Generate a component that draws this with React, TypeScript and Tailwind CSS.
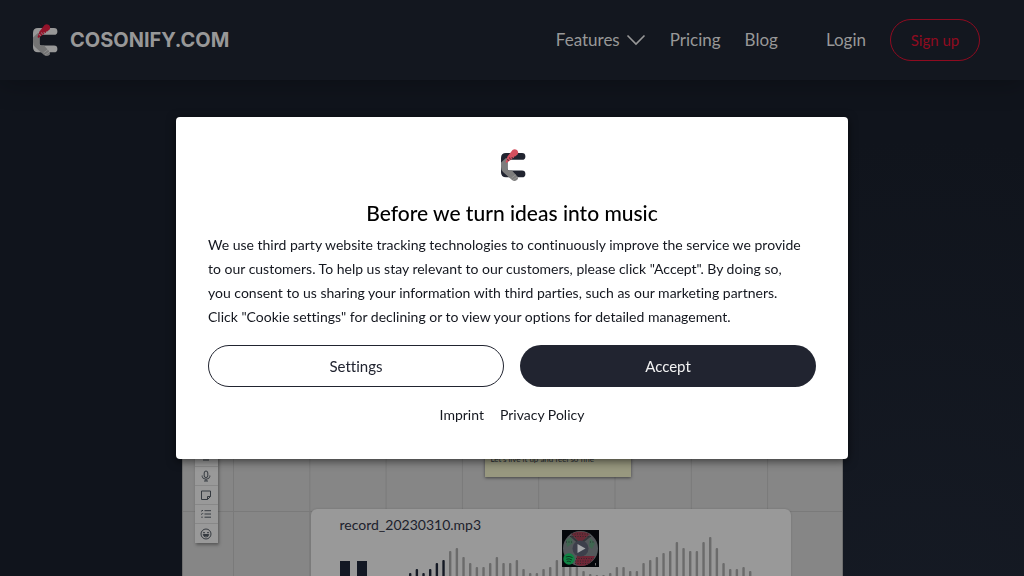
type LogoProps = { body: string; tail: string; accent: string };

function LogoMark({ body, tail, accent }: LogoProps) {
  return (
    <svg viewBox="0 0 26 32" className="h-8 w-[26px] shrink-0" aria-hidden="true">
      <path
        d="M6 4H22A3.400 3.400 0 0 1 22 10.800H9.500Q7.500 10.800 7.500 12.800V19.500Q7.500 21.500 9.500 21.500H22A3.400 3.400 0 0 1 22 28.300H6Q1 28.300 1 23.300V9Q1 4 6 4Z"
        fill={body}
      />
      <path d="M1 13.500L6 9L8.500 10.800L7.500 12.800V19.500Q7.500 21.500 9.500 21.500H12L17 27Q19 29.500 17 31Q14.500 33 12 31L3 23Q1 21 1 18Z" fill={tail} />
      <path d="M1 15L7.500 9.500" stroke={tail} strokeWidth="1" strokeDasharray="1 0.800" />
      <path d="M12.500 1Q14.500-0.500 17 1Q19 3 17.500 5.500L14 8.500L6.500 14L5.500 13L7.500 7.500Z" fill={accent} />
      <path d="M7.500 10L8.500 12M9.500 8.500L10.500 10.500M12 8L12.500 9.800M14.500 7.500V9.500" stroke={body} strokeWidth="0.8" />
      <path d="M11.500 29L16 25.500M13 31L18 27.500M15.500 32L18 30" stroke="#ffffff" strokeWidth="0.6" opacity="0.3" />
    </svg>
  );
}

const levels = [
  4, 8, 4, 8, 14, 17, 26, 29, 20, 14, 10, 10, 14, 20, 14, 14, 17, 8, 4, 4, 8, 10, 17, 14, 14, 10, 6, 3, 2, 2, 4, 10,
  10, 6, 6, 14, 17, 20, 24, 26, 35, 29, 26, 26, 35, 40, 29, 14, 8, 8, 10, 6,
];

function Waveform() {
  return (
    <svg viewBox="0 0 344 80" className="h-20 w-[344px]" aria-hidden="true">
      {levels.map((level, i) => (
        <rect
          key={i}
          x={i * 6.667}
          y={40 - level}
          width="2.4"
          height={level * 2}
          rx="1"
          fill={i < 6 ? "#151a25" : "#6b6b6b"}
        />
      ))}
    </svg>
  );
}

function Cover() {
  return (
    <svg viewBox="0 0 37 37" className="h-[37px] w-[37px]" aria-hidden="true">
      <rect width="37" height="37" fill="#05070b" />
      <circle cx="18.500" cy="18.500" r="17.500" fill="#53585b" />
      <path d="M9 4Q18-1 28 4L21 11H16Z" fill="#6a2a36" />
      <path d="M13 34L15 26H33Q29 36 18 36Z" fill="#6f2636" />
      <path d="M4 10L9 7L11 13L5 17ZM28 8L33 13L30 19L27 16Z" fill="#3f6650" />
      <path d="M9 6L18 14L28 6" stroke="#34373b" strokeWidth="2" fill="none" />
      <path
        d="M10 4H27M8 6.500H29M14 28.500H32M13 31H30M13 33.500H27M4 12H10M28 12H33"
        stroke="#24262b"
        strokeWidth="0.8"
        strokeDasharray="1 1.500"
      />
      <circle cx="18.500" cy="18.500" r="8" fill="#3d3f4b" />
      <path d="M15.500 14L23.500 18.500L15.500 23Z" fill="#a6a8ab" />
      <circle cx="7" cy="29" r="5.700" fill="#108444" />
      <path d="M3.800 27Q7 25.500 10.500 27.500M4.300 29.300Q7 28 10 30M4.800 31.400Q7 30.500 9 32" stroke="#0b3b20" strokeWidth="1" fill="none" />
      <path d="M33.500 33V35.500" stroke="#888" strokeWidth="0.8" />
    </svg>
  );
}

const tools = [
  { label: "Text", path: "M2 3H10M2 6H10M3 9H9" },
  { label: "Record", path: "M6 1Q4.200 1 4.200 3V6Q4.200 7.500 6 7.500T7.800 6V3Q7.800 1 6 1ZM2.200 5.500V6.500Q2.500 9.200 6 9.200T9.800 6.500V5.500M6 9.200V11M4 11H8" },
  { label: "Note", path: "M1.500 2H10.500V7.500L7.500 10.500H1.500ZM10.500 7.500H7.500V10.500" },
  { label: "List", path: "M1 2.500L1.800 3.200L3 2M1 5.700L1.800 6.400L3 5.200M1.300 9.200H2.700M4.500 2.700H11M4.500 6H11M4.500 9.200H11" },
  { label: "Emoji", path: "M6 1A5 5 0 1 0 6 11A5 5 0 1 0 6 1ZM3 4.700L5 4.700M7 4.700L9 4.700M3.200 6.500H8.800Q8.300 9 6 9T3.200 6.500ZM4 7.500H8" },
];

function Header() {
  return (
    <header className="relative flex h-20 shrink-0 items-center justify-between bg-[#13171f] pr-11 pl-8 shadow-[0_4px_24px_rgba(0,0,0,0.25)]">
      <a href="#home" className="flex items-center gap-3 text-[#989898]">
        <LogoMark body="#989898" tail="#747474" accent="#92132a" />
        <span className="font-[Inter,sans-serif] text-[20px] font-bold">COSONIFY.COM</span>
      </a>
      <nav className="flex items-center gap-6 text-[17px] text-[#989898]">
        <button type="button" className="flex items-center gap-1.5">
          Features
          <svg viewBox="0 0 20 12" className="h-3 w-5" fill="none" stroke="currentColor" strokeWidth="1.6" aria-hidden="true">
            <path d="M1.500 1.500L10 10L18.500 1.500" />
          </svg>
        </button>
        <a href="#pricing">Pricing</a>
        <a href="#blog">Blog</a>
        <a href="#login" className="ml-6">Login</a>
        <a
          href="#signup"
          className="flex h-[42px] w-[90px] items-center justify-center rounded-full border border-[#8f0b20] text-[15px] text-[#8f0b20]"
        >
          Sign up
        </a>
      </nav>
    </header>
  );
}

function Board() {
  return (
    <div className="relative h-[460px] w-[661px] shrink-0 border-x border-[#6f6f6f] bg-[#868686]">
      <svg className="absolute inset-0 h-full w-full" aria-hidden="true">
        <defs>
          <pattern id="grid" x="50" y="15" width="76.300" height="76.300" patternUnits="userSpaceOnUse">
            <path d="M0.500 0V76.300" stroke="#7a7a7a" strokeWidth="1" />
          </pattern>
        </defs>
        <rect width="100%" height="100%" fill="url(#grid)" />
        <path d="M0 211.500H661" stroke="#7a7a7a" />
      </svg>
      <div className="absolute top-[148px] left-3 flex w-[23px] flex-col divide-y divide-[#888888] bg-[#999999] text-[#353a40] shadow-[1px_2px_3px_rgba(0,0,0,0.35)]">
        {tools.map(({ label, path }) => (
          <button key={label} type="button" aria-label={label} className="flex h-[19px] items-center justify-center">
            <svg viewBox="0 0 12 12" className="h-3 w-3" fill="none" stroke="currentColor" strokeWidth="1" aria-hidden="true">
              <path d={path} />
            </svg>
          </button>
        ))}
      </div>
      <div className="absolute top-[97px] left-[302px] flex h-20 w-[146px] items-end bg-[#98987f] px-1.5 pb-3 text-[8px] leading-3 text-[#2b2f36] shadow-[0_1px_3px_rgba(0,0,0,0.5)]">
        Let&apos;s live it up and feel so fine
      </div>
      <div className="absolute top-[209px] left-32 h-48 w-[480px] rounded-md bg-[#999999] shadow-[0_0_2px_rgba(0,0,0,0.2)]">
        <p className="px-[29px] pt-1 text-[14px] leading-6 text-[#1c212c]">record_20230310.mp3</p>
        <div className="flex items-start gap-[42px] pl-[29px]">
          <button type="button" aria-label="Pause" className="mt-6 flex gap-[7px]">
            <span className="h-9 w-2.5 bg-[#131824]" />
            <span className="h-9 w-2.5 bg-[#131824]" />
          </button>
          <Waveform />
        </div>
        <div className="absolute top-[21px] left-[251px]">
          <Cover />
        </div>
      </div>
    </div>
  );
}

function ConsentDialog() {
  return (
    <div className="fixed inset-0 flex items-center justify-center p-4">
      <section
        role="dialog"
        aria-modal="true"
        aria-labelledby="consent-title"
        className="w-full max-w-2xl rounded bg-white p-8 text-[#14171f] shadow-[0_2px_10px_rgba(0,0,0,0.6)]"
      >
        <div className="flex justify-center pl-0.5">
          <LogoMark body="#212430" tail="#7d7d7d" accent="#d4505f" />
        </div>
        <h2 id="consent-title" className="mt-4 mb-1 text-center text-[21px] leading-8 font-medium text-black">
          Before we turn ideas into music
        </h2>
        <p className="pr-3 text-[14px] leading-6">
          We use third party website tracking technologies to continuously improve the service we provide to our
          customers. To help us stay relevant to our customers, please click &quot;Accept&quot;. By doing so, you
          consent to us sharing your information with third parties, such as our marketing partners. Click
          &quot;Cookie settings&quot; for declining or to view your options for detailed management.
        </p>
        <div className="mt-4 grid grid-cols-2 gap-4">
          <button type="button" className="h-[42px] rounded-full border border-[#212430] text-[15px] text-[#212430]">
            Settings
          </button>
          <button type="button" className="h-[42px] rounded-full bg-[#212430] text-[15px] text-[#f2f2f2]">
            Accept
          </button>
        </div>
        <div className="mt-4 flex justify-center gap-4 text-[14px] leading-6">
          <a href="#imprint">Imprint</a>
          <a href="#privacy">Privacy Policy</a>
        </div>
      </section>
    </div>
  );
}

export default function App() {
  return (
    <div className="flex h-screen flex-col overflow-hidden bg-[#10141c] font-[Lato,sans-serif] [font-variant-ligatures:none]">
      <Header />
      <main className="flex justify-center bg-[radial-gradient(circle_at_90%_90%,#161b25,#10141c_50%)] pt-[220px]">
        <Board />
      </main>
      <ConsentDialog />
    </div>
  );
}
